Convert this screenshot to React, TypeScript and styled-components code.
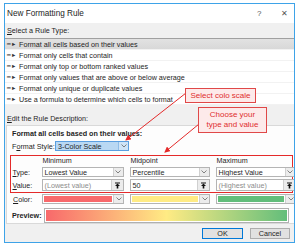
import React from 'react';
import styled, { createGlobalStyle } from 'styled-components';

const Global = createGlobalStyle`
  html, body { margin: 0; padding: 0; background: #ffffff; }
  body { font-family: "Liberation Sans", Arial, sans-serif; color: #1e1e1e; }
  * { box-sizing: border-box; }
`;

const Window = styled.div`
  position: relative;
  margin: 3px 0 0 4px;
  width: 291px;
  height: 240px;
  border: 1px solid #3ea3e8;
  background: #f0f0f0;
  display: flex;
  flex-direction: column;
  overflow: hidden;
  font-size: 7.2px;
`;

const TitleBar = styled.div`
  height: 19px;
  background: #ffffff;
  display: flex;
  align-items: center;
  padding: 0 6px 0 2px;
  font-size: 8.2px;
`;

const Title = styled.span`
  flex: 1;
`;

const TitleButton = styled.span<{ $w: number }>`
  width: ${p => p.$w}px;
  text-align: right;
  color: #555;
  font-size: 8px;
`;

const SectionLabel = styled.div<{ $h: number; $pt?: number }>`
  height: ${p => p.$h}px;
  padding: ${p => p.$pt ?? 0}px 0 0 2px;
  display: flex;
  align-items: ${p => (p.$pt ? 'flex-start' : 'center')};
`;

const U = styled.span`
  text-decoration: underline;
`;

const ListBox = styled.div`
  border-top: 1px solid #a0a0a0;
  background: #ffffff;
  display: flex;
  flex-direction: column;
`;

const ListRow = styled.div<{ $sel?: boolean }>`
  height: 11px;
  display: flex;
  align-items: center;
  padding-left: 2px;
  gap: 3px;
  background: ${p => (p.$sel ? 'linear-gradient(#e2e2e2, #d8d8d8)' : '#ffffff')};
  border-bottom: 1px solid #f2f2f2;
  white-space: nowrap;
`;

const Marker = styled.span`
  font-size: 5.5px;
  color: #333;
  width: 9px;
`;

const Panel = styled.div`
  margin-left: 1px;
  height: 99px;
  background: #fdfdfd;
  border: 1px solid #d9d9d9;
  border-right: none;
  display: flex;
  flex-direction: column;
  padding: 3px 2px 0 2px;
`;

const Heading = styled.div`
  font-weight: bold;
  padding-left: 3px;
  height: 9px;
  line-height: 9px;
`;

const StyleRow = styled.div`
  display: flex;
  align-items: center;
  padding-left: 3px;
  margin-top: 3px;
  height: 10px;
  gap: 6px;
`;

const Label = styled.span<{ $w?: number; $bold?: boolean }>`
  width: ${p => (p.$w ? `${p.$w}px` : 'auto')};
  font-weight: ${p => (p.$bold ? 'bold' : 'normal')};
  white-space: nowrap;
`;

const Combo = styled.div<{ $w: number; $h?: number; $hl?: boolean }>`
  width: ${p => p.$w}px;
  height: ${p => p.$h ?? 10}px;
  display: flex;
  align-items: stretch;
  border: 1px solid ${p => (p.$hl ? '#5b9fe0' : '#b4b4b4')};
  background: ${p => (p.$hl ? '#b9d8f3' : '#ffffff')};
`;

const ComboText = styled.span<{ $muted?: boolean }>`
  flex: 1;
  padding-left: 2px;
  display: flex;
  align-items: center;
  color: ${p => (p.$muted ? '#8c8c8c' : '#1e1e1e')};
  white-space: nowrap;
  overflow: hidden;
`;

const ArrowBtn = styled.span<{ $w?: number; $hl?: boolean }>`
  width: ${p => p.$w ?? 10}px;
  border-left: 1px solid ${p => (p.$hl ? '#8fbde8' : '#d0d0d0')};
  background: ${p => (p.$hl ? '#cfe4f7' : '#ececec')};
  display: flex;
  align-items: center;
  justify-content: center;
`;

const Swatch = styled.span<{ $c: string }>`
  flex: 1;
  margin: 1px;
  background: ${p => p.$c};
`;

const RedBox = styled.div`
  margin: 4px 0 0 1px;
  width: 283px;
  border: 1.5px solid #e42a2a;
  padding: 1px 0 1px 1.5px;
  display: grid;
  grid-template-columns: 23px 82px 80px 80px;
  column-gap: 6px;
  row-gap: 2px;
  align-items: center;
`;

const ColHead = styled.span`
  height: 8px;
  line-height: 8px;
  padding-left: 1px;
`;

const Grid = styled.div`
  display: grid;
  grid-template-columns: 23px 82px 80px 80px;
  column-gap: 6px;
  align-items: center;
  padding-left: 4px;
  margin-top: 1px;
`;

const PreviewRow = styled.div`
  display: flex;
  align-items: center;
  gap: 2px;
  padding: 0 3px 0 3px;
  margin-top: 4px;
`;

const PreviewBar = styled.div`
  flex: 1;
  height: 15px;
  border: 1px solid #b0b0b0;
  padding: 1px;
  background: #fff;
`;

const Gradient = styled.div`
  height: 100%;
  background: linear-gradient(90deg, #f8696b 0%, #ffeb84 50%, #63be7b 100%);
`;

const Footer = styled.div`
  flex: 1;
  display: flex;
  justify-content: flex-end;
  align-items: flex-start;
  padding: 4px 4px 0 0;
  gap: 7px;
`;

const Button = styled.button<{ $def?: boolean; $w: number }>`
  width: ${p => p.$w}px;
  height: 11px;
  padding: 0;
  font: inherit;
  font-size: 7.2px;
  color: #1e1e1e;
  background: #e1e1e1;
  border: 1px solid ${p => (p.$def ? '#0078d7' : '#adadad')};
`;

const Callout = styled.div<{ $l: number; $t: number; $w: number; $h: number }>`
  position: absolute;
  left: ${p => p.$l}px;
  top: ${p => p.$t}px;
  width: ${p => p.$w}px;
  height: ${p => p.$h}px;
  border: 1px solid #e04848;
  background: #fdeaea;
  color: #e02e2e;
  font-size: 8px;
  line-height: 10px;
  display: flex;
  align-items: center;
  justify-content: center;
  text-align: center;
`;

const Overlay = styled.svg`
  position: absolute;
  left: 0;
  top: 0;
  pointer-events: none;
`;

const Chevron = () => (
  <svg width="6" height="4" viewBox="0 0 6 4">
    <path d="M0.5 0.5 L3 3 L5.5 0.5" fill="none" stroke="#666" strokeWidth="0.8" />
  </svg>
);

const UpIcon = () => (
  <svg width="7" height="7" viewBox="0 0 7 7">
    <rect x="1" y="0.5" width="5" height="1" fill="#111" />
    <path d="M3.5 1.5 L6 4 L4.3 4 L4.3 6.5 L2.7 6.5 L2.7 4 L1 4 Z" fill="#111" />
  </svg>
);

const DropCombo = ({ w, text }: { w: number; text: string }) => (
  <Combo $w={w}>
    <ComboText>{text}</ComboText>
    <ArrowBtn>
      <Chevron />
    </ArrowBtn>
  </Combo>
);

const ValueBox = ({ w, text, muted }: { w: number; text: string; muted?: boolean }) => (
  <Combo $w={w} $h={12}>
    <ComboText $muted={muted}>{text}</ComboText>
    <ArrowBtn $w={12}>
      <UpIcon />
    </ArrowBtn>
  </Combo>
);

const ColorCombo = ({ w, c }: { w: number; c: string }) => (
  <Combo $w={w}>
    <Swatch $c={c} />
    <ArrowBtn>
      <Chevron />
    </ArrowBtn>
  </Combo>
);

const rules = [
  'Format all cells based on their values',
  'Format only cells that contain',
  'Format only top or bottom ranked values',
  'Format only values that are above or below average',
  'Format only unique or duplicate values',
  'Use a formula to determine which cells to format',
];

export default function App() {
  return (
    <>
      <Global />
      <Window>
        <TitleBar>
          <Title>New Formatting Rule</Title>
          <TitleButton $w={0}>?</TitleButton>
          <TitleButton $w={31}>✕</TitleButton>
        </TitleBar>
        <SectionLabel $h={15}>
          <span>
            <U>S</U>elect a Rule Type:
          </span>
        </SectionLabel>
        <ListBox>
          {rules.map((r, i) => (
            <ListRow key={r} $sel={i === 0}>
              <Marker>━►</Marker>
              <span>{r}</span>
            </ListRow>
          ))}
        </ListBox>
        <SectionLabel $h={20} $pt={9}>
          <span>
            <U>E</U>dit the Rule Description:
          </span>
        </SectionLabel>
        <Panel>
          <Heading>Format all cells based on their values:</Heading>
          <StyleRow>
            <Label $w={37}>
              F<U>o</U>rmat Style:
            </Label>
            <Combo $w={74} $hl>
              <ComboText>3-Color Scale</ComboText>
              <ArrowBtn $hl>
                <Chevron />
              </ArrowBtn>
            </Combo>
          </StyleRow>
          <RedBox>
            <span />
            <ColHead>Minimum</ColHead>
            <ColHead>Midpoint</ColHead>
            <ColHead>Maximum</ColHead>
            <Label>
              <U>T</U>ype:
            </Label>
            <DropCombo w={82} text="Lowest Value" />
            <DropCombo w={80} text="Percentile" />
            <DropCombo w={80} text="Highest Value" />
            <Label>
              <U>V</U>alue:
            </Label>
            <ValueBox w={82} text="(Lowest value)" muted />
            <ValueBox w={80} text="50" />
            <ValueBox w={80} text="(Highest value)" muted />
          </RedBox>
          <Grid>
            <Label>
              <U>C</U>olor:
            </Label>
            <ColorCombo w={82} c="#f8696b" />
            <ColorCombo w={80} c="#ffeb84" />
            <ColorCombo w={80} c="#63be7b" />
          </Grid>
          <PreviewRow>
            <Label $bold>Preview:</Label>
            <PreviewBar>
              <Gradient />
            </PreviewBar>
          </PreviewRow>
        </Panel>
        <Footer>
          <Button $def $w={41}>OK</Button>
          <Button $w={40}>Cancel</Button>
        </Footer>
        <Overlay width="291" height="240" viewBox="0 0 291 240">
          <defs>
            <marker id="ah" markerWidth="6" markerHeight="6" refX="5" refY="3" orient="auto" markerUnits="userSpaceOnUse">
              <path d="M0 0 L6 3 L0 6 Z" fill="#e42a2a" />
            </marker>
          </defs>
          <line x1="181" y1="89" x2="121" y2="136" stroke="#e42a2a" strokeWidth="1" markerEnd="url(#ah)" />
          <line x1="194" y1="120" x2="160" y2="148" stroke="#e42a2a" strokeWidth="1" markerEnd="url(#ah)" />
        </Overlay>
        <Callout $l={180} $t={84} $w={71} $h={15}>Select colo scale</Callout>
        <Callout $l={193} $t={103} $w={69} $h={26}>
          Choose your
          <br />
          type and value
        </Callout>
      </Window>
    </>
  );
}
